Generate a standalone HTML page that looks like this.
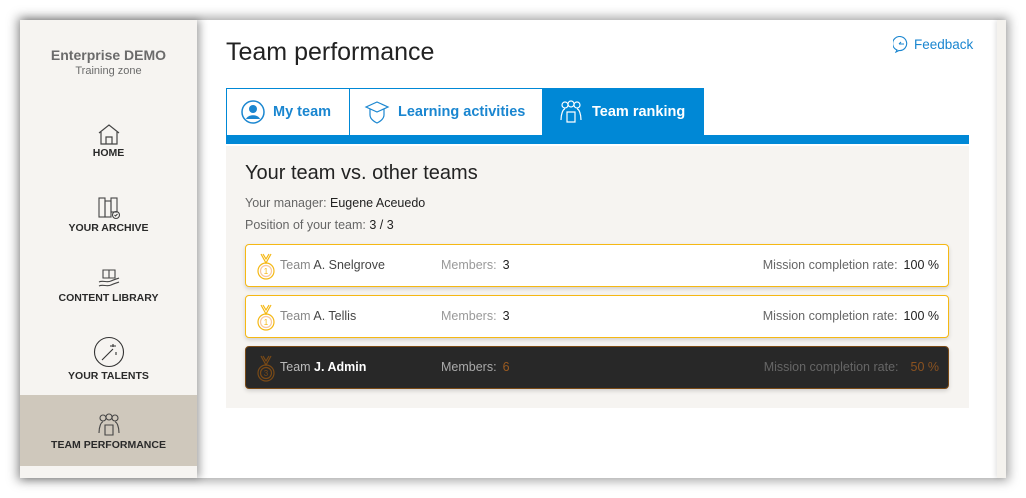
<!DOCTYPE html>
<html><head><meta charset="utf-8"><style>
*{box-sizing:border-box;margin:0;padding:0}
body{width:1026px;height:498px;background:#fff;font-family:"Liberation Sans",sans-serif;position:relative;overflow:hidden}
.win{position:absolute;left:20px;top:20px;width:986px;height:458px;background:#fff;box-shadow:0 0 10px 3px rgba(0,0,0,.35)}
.side{position:absolute;left:0;top:0;width:177px;height:458px;background:#f6f4f1;box-shadow:3px 0 8px rgba(0,0,0,.35);z-index:2}
.brand{position:absolute;top:27px;width:177px;text-align:center;color:#6b6b6b}
.brand b{display:block;font-size:14px}
.brand span{display:block;font-size:11px;margin-top:2px}
.nav{position:absolute;width:177px;text-align:center;font-size:10.5px;font-weight:bold;color:#2a2a2a}
.nav svg{display:block;margin:0 auto 2px}
.act{background:#cfc8bc}
.rstrip{position:absolute;right:0;top:0;width:9px;height:458px;background:#f4f2ee;box-shadow:-2px 0 4px rgba(0,0,0,.1)}
h1{position:absolute;left:206px;top:18px;font-size:25px;font-weight:normal;color:#222}
.fb{position:absolute;left:873px;top:16px;color:#1a86d0;font-size:13.5px;display:flex;align-items:center;gap:4px}
.tabs{position:absolute;left:206px;top:68px;height:47px;display:flex}
.tab{border:1px solid #0088d6;border-bottom:none;height:47px;display:flex;align-items:center;padding-left:14px;gap:8px;color:#1a86d0;font-weight:bold;font-size:14.5px;background:#fff}
.tab.on{background:#0088d6;color:#fff}
.bar{position:absolute;left:206px;top:115px;width:743px;height:9px;background:#0088d6}
.panel{position:absolute;left:206px;top:126px;width:743px;height:262px;background:#f6f4f1}
h2{position:absolute;left:19px;top:16px;font-size:20px;font-weight:normal;color:#222}
.info{position:absolute;left:19px;font-size:12.5px;color:#666}
.info b{font-weight:normal;color:#222}
.row{position:absolute;left:19px;width:704px;height:43px;border:1.5px solid #f5b814;border-radius:4px;background:#fff;box-shadow:0 2px 4px rgba(0,0,0,.15);font-size:12.5px;color:#888}
.row>*{position:absolute;top:13px}
.row .m{left:10px;top:8px}
.row .t{left:34px}.row .t b{font-weight:normal;color:#444}
.row .mb{left:195px;color:#999}.row .mb b{font-weight:normal;color:#222;margin-left:6px}
.row .r{right:9px;color:#666}.row .r b{font-weight:normal;color:#222;margin-left:6px}
.row.dk{background:#282828;border-color:#7a4a16}
.row.dk .t{color:#bbb}.row.dk .t b{color:#fff;font-weight:bold}
.row.dk .mb{color:#aaa}.row.dk .mb b{color:#9a5a20}
.row.dk .r{color:#666}.row.dk .r b{color:#8a5220;margin-left:12px}
</style></head><body>
<div class="win">
<div class="side">
 <div class="brand"><b>Enterprise DEMO</b><span>Training zone</span></div>
 <div class="nav" style="top:103px"><svg width="24" height="22" viewBox="0 0 24 22" fill="none" stroke="#444" stroke-width="1.2"><path d="M2 10L12 2l10 8M4 9v12h16V9M9 21v-7h6v7"/></svg>HOME</div>
 <div class="nav" style="top:176px"><svg width="26" height="24" viewBox="0 0 26 24" fill="none" stroke="#444" stroke-width="1.1"><rect x="3" y="2" width="6" height="19"/><rect x="9" y="5" width="6" height="16"/><rect x="15" y="2" width="6" height="14"/><circle cx="20" cy="19" r="3.5"/><path d="M18.5 19l1 1 2-2"/></svg>YOUR ARCHIVE</div>
 <div class="nav" style="top:248px"><svg width="26" height="22" viewBox="0 0 26 22" fill="none" stroke="#444" stroke-width="1.1"><path d="M7 2h6v8H7zM13 2h6v8h-6z"/><path d="M3 14c4-2 8 1 12-1s6-2 8-3M3 18c4-2 8 1 12-1s6-2 8-3"/></svg>CONTENT LIBRARY</div>
 <div class="nav" style="top:316px"><svg width="32" height="32" viewBox="0 0 32 32" fill="none" stroke="#333" stroke-width="1.1"><circle cx="16" cy="16" r="14.5"/><path d="M9 24l11-11M20 8v3M17 10h6M23 16v3"/></svg>YOUR TALENTS</div>
 <div class="nav act" style="top:375px;height:71px;padding-top:18px"><svg width="26" height="24" viewBox="0 0 26 24" fill="none" stroke="#444" stroke-width="1.1"><circle cx="7" cy="5" r="3"/><circle cx="13" cy="4" r="3"/><circle cx="19" cy="5" r="3"/><path d="M3 20c0-6 2-11 4-11M23 20c0-6-2-11-4-11M9 22V12h8v10z"/></svg>TEAM PERFORMANCE</div>
</div>
<div class="rstrip"></div>
<h1>Team performance</h1>
<div class="fb"><svg width="17" height="17" viewBox="0 0 17 17" fill="none" stroke="#1a86d0" stroke-width="1.1"><path d="M4 14l-1 2 3-1.5A7 7 0 1 0 4 14z"/><path d="M6 8h5M6 8l2-2"/></svg>Feedback</div>
<div class="tabs">
 <div class="tab" style="width:124px"><svg width="24" height="24" viewBox="0 0 24 24"><circle cx="12" cy="12" r="11" fill="none" stroke="#1a86d0" stroke-width="1.5"/><circle cx="12" cy="9" r="4" fill="#1a86d0"/><path d="M5 19c2-5 12-5 14 0" fill="#1a86d0"/></svg>My team</div>
 <div class="tab" style="width:193px;border-left:none"><svg width="26" height="24" viewBox="0 0 26 24" fill="none" stroke="#1a86d0" stroke-width="1.2"><path d="M2 7l11-5 11 5-11 5z"/><path d="M6 9v6c0 5 7 8 7 8s7-3 7-8V9"/></svg>Learning activities</div>
 <div class="tab on" style="width:161px"><svg width="26" height="24" viewBox="0 0 26 24" fill="none" stroke="#fff" stroke-width="1.2"><circle cx="7" cy="5" r="3"/><circle cx="13" cy="4" r="3"/><circle cx="19" cy="5" r="3"/><path d="M3 20c0-6 2-11 4-11M23 20c0-6-2-11-4-11M9 22V12h8v10z"/></svg>Team ranking</div>
</div>
<div class="bar"></div>
<div class="panel">
 <h2>Your team vs. other teams</h2>
 <div class="info" style="top:50px">Your manager: <b>Eugene Aceuedo</b></div>
 <div class="info" style="top:72px">Position of your team: <b>3 / 3</b></div>
 <div class="row" style="top:98px"><svg class="m" width="20" height="28" viewBox="0 0 20 28" fill="none" stroke="#f5b814" stroke-width="1.2"><path d="M5 1l5 9 5-9M7 1l3 5 3-5"/><circle cx="10" cy="18" r="8"/><circle cx="10" cy="18" r="5.5" stroke="#f8c8a0"/><text x="10" y="21" font-size="8" text-anchor="middle" fill="#f5b814" stroke="none">1</text></svg><span class="t">Team <b>A. Snelgrove</b></span><span class="mb">Members:<b>3</b></span><span class="r">Mission completion rate:<b>100 %</b></span></div>
 <div class="row" style="top:149px"><svg class="m" width="20" height="28" viewBox="0 0 20 28" fill="none" stroke="#f5b814" stroke-width="1.2"><path d="M5 1l5 9 5-9M7 1l3 5 3-5"/><circle cx="10" cy="18" r="8"/><circle cx="10" cy="18" r="5.5" stroke="#f8c8a0"/><text x="10" y="21" font-size="8" text-anchor="middle" fill="#f5b814" stroke="none">1</text></svg><span class="t">Team <b>A. Tellis</b></span><span class="mb">Members:<b>3</b></span><span class="r">Mission completion rate:<b>100 %</b></span></div>
 <div class="row dk" style="top:200px"><svg class="m" width="20" height="28" viewBox="0 0 20 28" fill="none" stroke="#7a4a16" stroke-width="1.2"><path d="M5 1l5 9 5-9M7 1l3 5 3-5"/><circle cx="10" cy="18" r="8"/><circle cx="10" cy="18" r="5.5"/><text x="10" y="21" font-size="8" text-anchor="middle" fill="#7a4a16" stroke="none">3</text></svg><span class="t">Team <b>J. Admin</b></span><span class="mb">Members:<b>6</b></span><span class="r">Mission completion rate:<b>50 %</b></span></div>
</div>
</div>
</body></html>
